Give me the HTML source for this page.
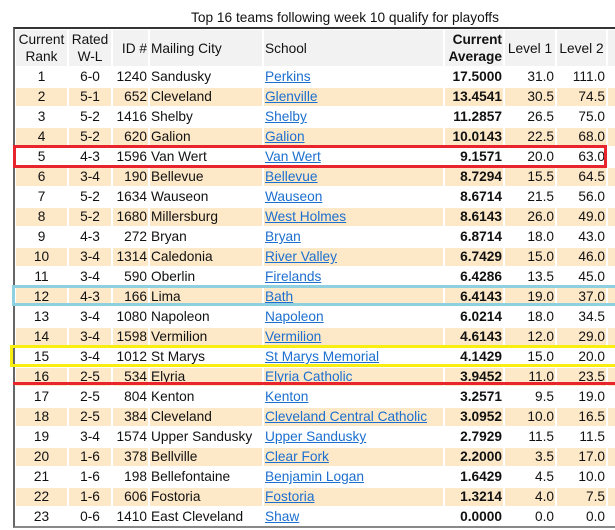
<!DOCTYPE html>
<html><head><style>
body{margin:0;width:615px;height:530px;overflow:hidden;background:#fff;font-family:"Liberation Sans",Arial,sans-serif;font-size:13.7px;color:#111;position:relative}
.title{position:absolute;left:0;top:10px;width:690px;text-align:center;font-size:13.7px}
.wrap{position:absolute;left:13px;top:27px;border-left:2px solid #666;border-top:2px solid #333;border-bottom:2px solid #888;width:620px;height:497px;overflow:hidden}
table{border-collapse:separate;border-spacing:2px;margin-left:-1px;margin-top:-1px}
td,th{padding:0 1px;height:18px;line-height:18px;white-space:nowrap;font-weight:normal}
th{background:#f2f2f2;height:36px;line-height:17px;vertical-align:middle}
tr:nth-child(odd) td{background:#fde8c8}
td.c{text-align:center}td.r{text-align:right}
td.b{font-weight:bold;text-align:right}
a{color:#1c6fcf;text-decoration:underline}
.box{position:absolute;border-style:solid;box-sizing:border-box}
</style></head><body>
<div class="title">Top 16 teams following week 10 qualify for playoffs</div>
<div class="wrap"><table>
<tr><th style="width:49px">Current<br>Rank</th><th style="width:40px">Rated<br>W-L</th><th style="width:33px;text-align:right">ID #</th><th style="width:110px;text-align:left">Mailing City</th><th style="width:177px;text-align:left">School</th><th style="width:56px;text-align:right;font-weight:bold">Current<br>Average</th><th style="width:48px">Level 1</th><th style="width:47px">Level 2</th><th style="width:20px"></th></tr>
<tr><td class="c">1</td><td class="c">6-0</td><td class="r">1240</td><td>Sandusky</td><td><a>Perkins</a></td><td class="b">17.5000</td><td class="r">31.0</td><td class="r">111.0</td><td></td></tr>
<tr><td class="c">2</td><td class="c">5-1</td><td class="r">652</td><td>Cleveland</td><td><a>Glenville</a></td><td class="b">13.4541</td><td class="r">30.5</td><td class="r">74.5</td><td></td></tr>
<tr><td class="c">3</td><td class="c">5-2</td><td class="r">1416</td><td>Shelby</td><td><a>Shelby</a></td><td class="b">11.2857</td><td class="r">26.5</td><td class="r">75.0</td><td></td></tr>
<tr><td class="c">4</td><td class="c">5-2</td><td class="r">620</td><td>Galion</td><td><a>Galion</a></td><td class="b">10.0143</td><td class="r">22.5</td><td class="r">68.0</td><td></td></tr>
<tr><td class="c">5</td><td class="c">4-3</td><td class="r">1596</td><td>Van Wert</td><td><a>Van Wert</a></td><td class="b">9.1571</td><td class="r">20.0</td><td class="r">63.0</td><td></td></tr>
<tr><td class="c">6</td><td class="c">3-4</td><td class="r">190</td><td>Bellevue</td><td><a>Bellevue</a></td><td class="b">8.7294</td><td class="r">15.5</td><td class="r">64.5</td><td></td></tr>
<tr><td class="c">7</td><td class="c">5-2</td><td class="r">1634</td><td>Wauseon</td><td><a>Wauseon</a></td><td class="b">8.6714</td><td class="r">21.5</td><td class="r">56.0</td><td></td></tr>
<tr><td class="c">8</td><td class="c">5-2</td><td class="r">1680</td><td>Millersburg</td><td><a>West Holmes</a></td><td class="b">8.6143</td><td class="r">26.0</td><td class="r">49.0</td><td></td></tr>
<tr><td class="c">9</td><td class="c">4-3</td><td class="r">272</td><td>Bryan</td><td><a>Bryan</a></td><td class="b">6.8714</td><td class="r">18.0</td><td class="r">43.0</td><td></td></tr>
<tr><td class="c">10</td><td class="c">3-4</td><td class="r">1314</td><td>Caledonia</td><td><a>River Valley</a></td><td class="b">6.7429</td><td class="r">15.0</td><td class="r">46.0</td><td></td></tr>
<tr><td class="c">11</td><td class="c">3-4</td><td class="r">590</td><td>Oberlin</td><td><a>Firelands</a></td><td class="b">6.4286</td><td class="r">13.5</td><td class="r">45.0</td><td></td></tr>
<tr><td class="c">12</td><td class="c">4-3</td><td class="r">166</td><td>Lima</td><td><a>Bath</a></td><td class="b">6.4143</td><td class="r">19.0</td><td class="r">37.0</td><td></td></tr>
<tr><td class="c">13</td><td class="c">3-4</td><td class="r">1080</td><td>Napoleon</td><td><a>Napoleon</a></td><td class="b">6.0214</td><td class="r">18.0</td><td class="r">34.5</td><td></td></tr>
<tr><td class="c">14</td><td class="c">3-4</td><td class="r">1598</td><td>Vermilion</td><td><a>Vermilion</a></td><td class="b">4.6143</td><td class="r">12.0</td><td class="r">29.0</td><td></td></tr>
<tr><td class="c">15</td><td class="c">3-4</td><td class="r">1012</td><td>St Marys</td><td><a>St Marys Memorial</a></td><td class="b">4.1429</td><td class="r">15.0</td><td class="r">20.0</td><td></td></tr>
<tr><td class="c">16</td><td class="c">2-5</td><td class="r">534</td><td>Elyria</td><td><a>Elyria Catholic</a></td><td class="b">3.9452</td><td class="r">11.0</td><td class="r">23.5</td><td></td></tr>
<tr><td class="c">17</td><td class="c">2-5</td><td class="r">804</td><td>Kenton</td><td><a>Kenton</a></td><td class="b">3.2571</td><td class="r">9.5</td><td class="r">19.0</td><td></td></tr>
<tr><td class="c">18</td><td class="c">2-5</td><td class="r">384</td><td>Cleveland</td><td><a>Cleveland Central Catholic</a></td><td class="b">3.0952</td><td class="r">10.0</td><td class="r">16.5</td><td></td></tr>
<tr><td class="c">19</td><td class="c">3-4</td><td class="r">1574</td><td>Upper Sandusky</td><td><a>Upper Sandusky</a></td><td class="b">2.7929</td><td class="r">11.5</td><td class="r">11.5</td><td></td></tr>
<tr><td class="c">20</td><td class="c">1-6</td><td class="r">378</td><td>Bellville</td><td><a>Clear Fork</a></td><td class="b">2.2000</td><td class="r">3.5</td><td class="r">17.0</td><td></td></tr>
<tr><td class="c">21</td><td class="c">1-6</td><td class="r">198</td><td>Bellefontaine</td><td><a>Benjamin Logan</a></td><td class="b">1.6429</td><td class="r">4.5</td><td class="r">10.0</td><td></td></tr>
<tr><td class="c">22</td><td class="c">1-6</td><td class="r">606</td><td>Fostoria</td><td><a>Fostoria</a></td><td class="b">1.3214</td><td class="r">4.0</td><td class="r">7.5</td><td></td></tr>
<tr><td class="c">23</td><td class="c">0-6</td><td class="r">1410</td><td>East Cleveland</td><td><a>Shaw</a></td><td class="b">0.0000</td><td class="r">0.0</td><td class="r">0.0</td><td></td></tr>
</table></div>
<div class="box" style="left:13px;top:145px;width:594px;height:23px;border-width:3px;border-color:#e8242c"></div>
<div class="box" style="left:12px;top:285px;width:610px;height:21px;border-width:3px;border-color:#8fd0e0"></div>
<div class="box" style="left:10px;top:345px;width:610px;height:22px;border-width:3px;border-color:#f8ee10"></div>
<div style="position:absolute;left:13px;top:382px;width:602px;height:3px;background:#e8242c"></div>
</body></html>
